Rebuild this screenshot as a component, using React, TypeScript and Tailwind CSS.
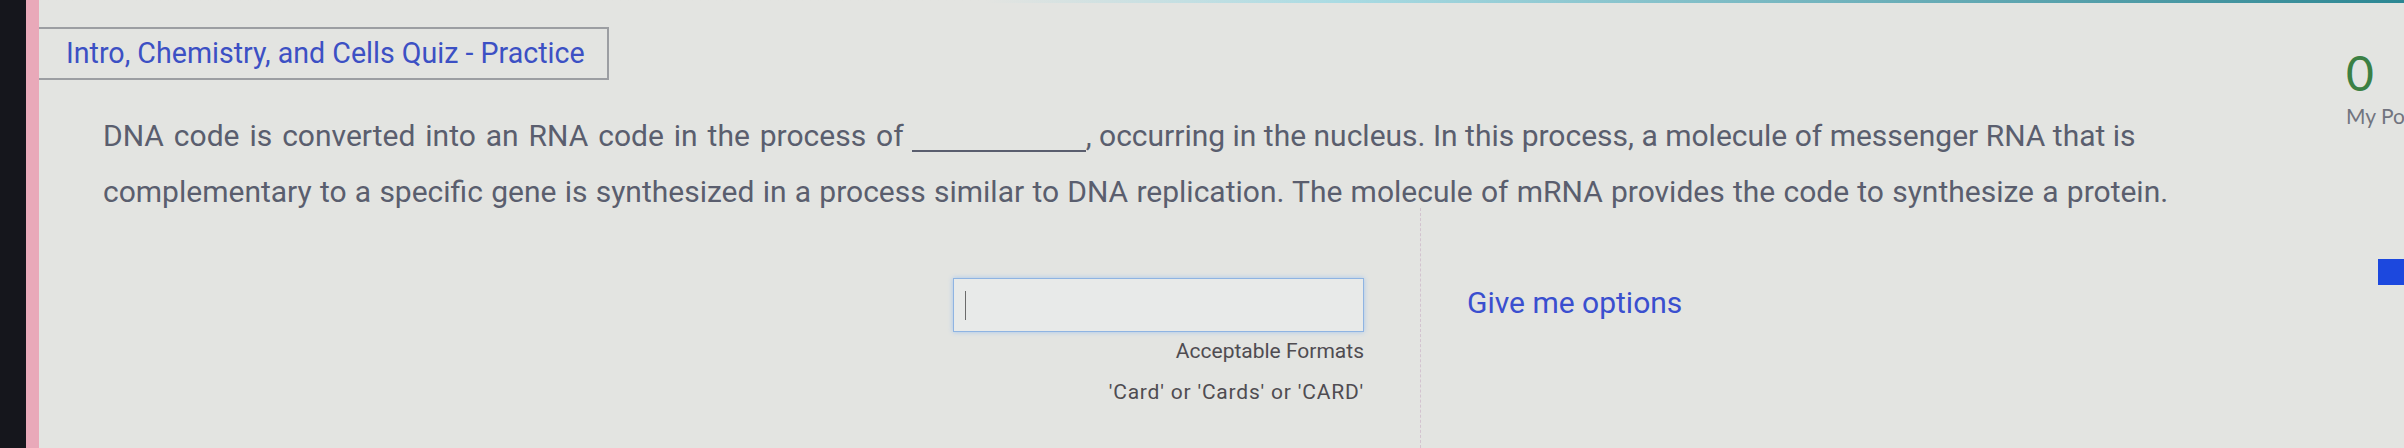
export default function App() {
  return (
    <div className="flex h-[448px] w-[2404px] overflow-hidden bg-[#e3e4e1] font-['Roboto',sans-serif]">
      <div className="w-[26px] shrink-0 bg-[#15161c]" />
      <div className="w-[13px] shrink-0 bg-[#e9a9b9]" />

      <div className="flex min-w-0 flex-1 flex-col">
        <div className="h-[3px] w-full bg-gradient-to-r from-[#e3e4e1] from-40% via-[#a9dbe3] via-55% to-[#2b8793]" />

        <div className="flex flex-1">
          <div className="flex min-w-0 flex-1 flex-col">
            <div className="mt-[24px] flex h-[53px] w-[570px] items-center border-y-2 border-r-2 border-[#9c9ea2] pl-[27px]">
              <span className="text-[28.6px] leading-none text-[#3c50c4]">
                Intro, Chemistry, and Cells Quiz - Practice
              </span>
            </div>

            <p className="mt-[28px] pl-[64px] text-[30px] leading-[56px] whitespace-nowrap text-[#5a5e6e]">
              <span className="[word-spacing:2.5px]">DNA code is converted into an RNA code in the process of</span>
              <span className="ml-[8px] inline-block w-[174px] border-b-2 border-[#5a5e6e] align-[-6px]" />
              , occurring in the nucleus. In this process, a molecule of messenger RNA that is
              <br />
              <span className="[word-spacing:0.8px]">
                complementary to a specific gene is synthesized in a process similar to DNA replication. The molecule of mRNA provides the code to synthesize a protein.
              </span>
            </p>

            <div className="mt-[58px] ml-[914px] flex flex-1">
              <div className="flex w-[411px] flex-col items-end">
                <div className="flex h-[54px] w-full items-center border border-[#8fb4e2] bg-[#e8eae9] pl-[11px] shadow-[0_0_5px_#a4c6ee]">
                  <div className="h-[29px] w-px bg-[#6b6b6b]" />
                </div>
                <div className="mt-[5px] text-[21px] leading-[28px] text-[#4f4c51]">
                  Acceptable Formats
                </div>
                <div className="mt-[13px] text-[21px] leading-[28px] tracking-[0.8px] text-[#4f4c51]">
                  'Card' or 'Cards' or 'CARD'
                </div>
              </div>

              <div className="-mt-[70px] ml-[56px] w-0 self-stretch border-l border-dashed border-[#d3c3cf]" />

              <div className="ml-[46px] mt-[5px] text-[30px] leading-[40px] whitespace-nowrap text-[#3a4fcf]">
                Give me options
              </div>
            </div>
          </div>

          <div className="flex w-[58px] shrink-0 flex-col font-['Lato',sans-serif]">
            <div className="mt-[46px] text-[48px] leading-none text-[#3b8044]">0</div>
            <div className="mt-[8px] whitespace-nowrap text-[21px] leading-none text-[#71747f]">
              My Points
            </div>
            <div className="mt-[133px] ml-[32px] h-[26px] w-[30px] bg-[#1c48de]" />
          </div>
        </div>
      </div>
    </div>
  );
}
